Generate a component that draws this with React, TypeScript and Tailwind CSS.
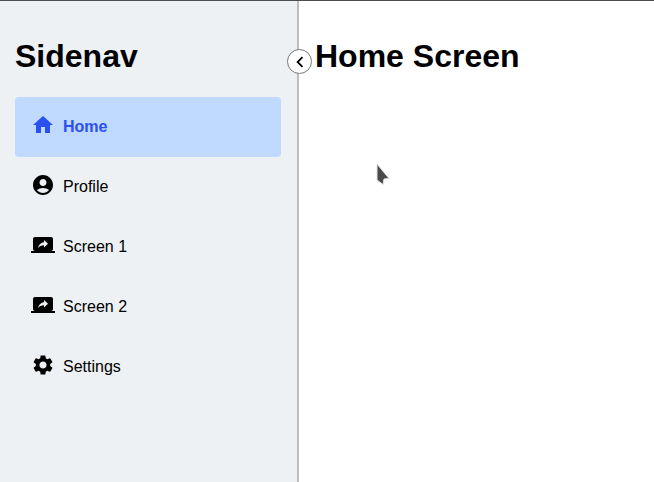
import { MdHome, MdAccountCircle, MdScreenShare, MdSettings, MdChevronLeft } from "react-icons/md";

const items = [
  { label: "Home", icon: MdHome, active: true },
  { label: "Profile", icon: MdAccountCircle },
  { label: "Screen 1", icon: MdScreenShare },
  { label: "Screen 2", icon: MdScreenShare },
  { label: "Settings", icon: MdSettings },
];

export default function App() {
  return (
    <div className="relative flex h-[482px] w-[654px] flex-col overflow-hidden bg-white font-['Liberation_Sans',sans-serif] text-black">
      <div className="h-px bg-[#4d4d4d]" />
      <div className="flex min-h-0 flex-1">
        {/* Sidebar */}
        <aside className="relative w-[299px] shrink-0 border-r-2 border-[#bdbdbd] bg-[#edf1f3] px-[15px] pt-[36px]">
          <h1 className="mb-[22px] h-[38px] text-[32px] leading-[38px] font-bold">Sidenav</h1>
          <nav className="flex w-[266px] flex-col">
            {items.map((item) => (
              <a
                key={item.label}
                className={
                  item.active
                    ? "flex h-[60px] items-center gap-2 rounded bg-[#bfd9ff] pl-4 font-bold text-[#2b50f0]"
                    : "flex h-[60px] items-center gap-2 rounded pl-4"
                }
              >
                <item.icon size={24} className="mb-1" />
                <span className="text-base">{item.label}</span>
              </a>
            ))}
          </nav>
          <button className="absolute top-[48px] right-[-15px] flex h-[25px] w-[25px] items-center justify-center rounded-full border border-[#777777] bg-white">
            <MdChevronLeft size={22} />
          </button>
        </aside>
        {/* Main */}
        <main className="flex-1 pt-[36px] pl-[16px]">
          <h1 className="h-[38px] text-[32px] leading-[38px] font-bold">Home Screen</h1>
        </main>
      </div>
      {/* Mouse pointer in the capture */}
      <svg className="absolute top-[163px] left-[375px]" width="16" height="24" viewBox="0 0 16 24">
        <path d="M2 1 L2 17 L8 21.5 L9 16 L14 15.5 Z" fill="#4a4a4a" stroke="#e2e2e2" strokeWidth="1" />
      </svg>
    </div>
  );
}
